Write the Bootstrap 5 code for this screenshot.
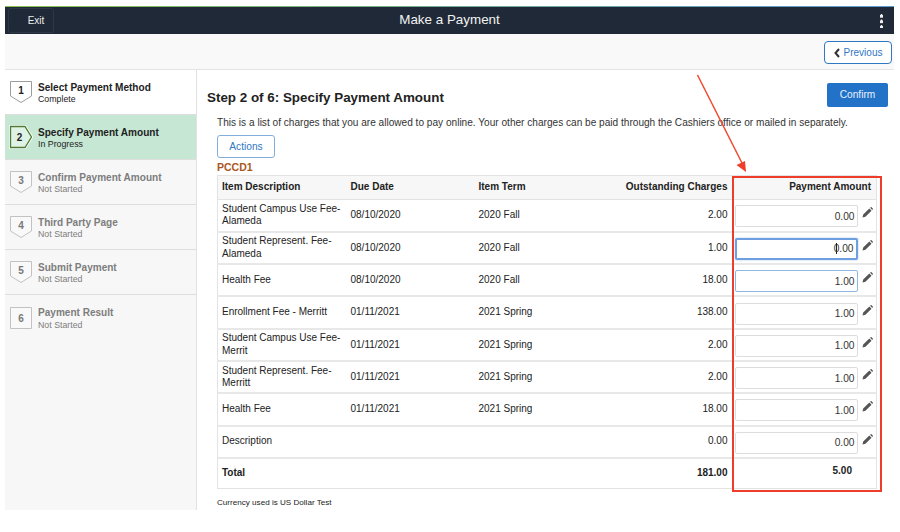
<!DOCTYPE html>
<html lang="en">
<head>
<meta charset="utf-8">
<title>Make a Payment</title>
<link rel="stylesheet" href="https://cdn.jsdelivr.net/npm/bootstrap@5.3.0/dist/css/bootstrap.min.css">
<style>
html,body{height:532px;overflow:hidden;background:#fff}
body{font-family:"Liberation Sans",Arial,sans-serif;font-size:10px;color:#222}
.shell{position:relative;height:532px;padding:6px 6px 0 5px}
.topbar{height:28px;background:#1f2937;border-top:1px solid;border-image:linear-gradient(90deg,#8cc152,#5b9bd5) 1;color:#fff}
.top-side{flex:1 1 0}
.exit-btn{width:46px;height:25px;margin-left:3px;border:1px solid #2d3746;border-radius:2px;color:#eee;font-size:10px;line-height:23px;text-align:center;padding-left:10px}
.top-title{font-size:13.4px;color:#f2f2f2}
.kebab{width:3px;height:14px;margin-right:11px;background:radial-gradient(circle at 1.5px 2px,#eee 1.6px,transparent 1.9px) 0 0/3px 5.5px repeat-y}
.subbar{height:36px;background:#f9f9f9;border-bottom:1px solid #e4e4e4;padding:7px 2px 0 0}
.prev-btn{width:68px;height:23px;padding:0;border:1.5px solid #2f78c4;border-radius:4px;background:#fff;color:#2f78c4;font-size:10px;gap:4px}
.prev-btn svg{width:6px;height:10px}
.body-area{height:440px}
.side{width:192px;flex:none;background:#f7f7f7;border-right:1px solid #e2e2e2}
.step{height:45px;padding:0 0 0 4px;border-bottom:1px solid #dedede;gap:5px;color:#7d7d7d}
.step svg{width:24px;height:24px;flex:none}
.step b{display:block;font-size:10.05px;line-height:11.5px;margin-top:3px}
.step small{display:block;font-size:8.8px;line-height:12px;font-weight:400}
.step.done{background:#fff;color:#222}
.step.now{background:#c6e7d4;color:#222}
.main{min-width:0;padding:0 0 0 10px;background:#fff}
.head-line{height:47px;padding:11px 6px 0 0}
.page-h{font-size:13.4px;font-weight:700;margin:9px 0 0;color:#222}
.confirm-btn{width:61px;height:24px;padding:0;background:#2272c8;border:0;border-radius:2px;color:#e9f1fb;font-size:10.2px;line-height:24px;margin-top:2px}
.intro{margin:0 0 0 10px;line-height:12px;font-size:10.1px;color:#333;height:18px}
.act-btn{display:block;margin:0 0 0 10px;width:58px;height:23px;padding:0;background:#fff;border:1px solid #82aedb;border-radius:3px;color:#2f78c4;font-size:10.2px;line-height:21px}
.org{margin:3px 0 1px 10px;font-size:10.5px;line-height:13px;font-weight:700;color:#a9571e}
.pay-table{width:660px;margin:0 0 0 10px;table-layout:fixed;border:1px solid #e3e3e3;font-size:10px;color:#222}
.pay-table th,.pay-table td{padding:0 5px 0 4px;vertical-align:middle;border-bottom:2px solid #e8e8e8;line-height:12.5px;box-shadow:none;color:#222}
.pay-table thead th{height:24px;background:#f7f7f7;font-weight:700;border-bottom:1px solid #e3e3e3}
.pay-table tbody td{height:32.3px}
.pay-table tfoot td{height:31px;font-weight:700;border-bottom:0}
.pay-table td.pay-cell{padding:0 0 0 2px}
.pay-table td.total-amt{padding:0 24px 5px 0}
.amt-wrap{position:relative;display:flex;align-items:center;gap:4px}
.amt{width:123px;height:22px;padding:0 2px 0 0;border:1px solid #ddd;border-radius:2px;font-size:10.2px;color:#333;text-align:right;background:#fff;margin-top:2px;font-family:inherit;outline:0}
.amt.ring{border:2px solid #6e9fdf;box-shadow:0 0 2px #9dbfee}
.amt.lit{border-color:#8fb5e3}
.caret-mark::after{content:"";position:absolute;left:101px;top:7px;width:1px;height:11px;background:#222}
.pen{width:11px;height:11px;flex:none;margin-top:-5px}
.red-box{position:absolute;left:732px;top:176px;width:150px;height:316px;border:2px solid #ef3d2c;pointer-events:none}
.arrow{position:absolute;left:690px;top:70px;width:70px;height:110px;pointer-events:none}
.foot-note{margin:8px 0 0 10px;font-size:8.1px;line-height:11px;color:#222}
</style>
</head>
<body>
<div class="shell">
  <header class="topbar d-flex align-items-center">
    <div class="top-side"><div class="exit-btn">Exit</div></div>
    <div class="top-title">Make a Payment</div>
    <div class="top-side d-flex justify-content-end"><div class="kebab"></div></div>
  </header>
  <div class="subbar d-flex justify-content-end align-items-start">
    <button class="prev-btn d-flex align-items-center justify-content-center" type="button"><svg viewBox="0 0 6 10"><path d="M5 1 1.500 5 5 9" fill="none" stroke="#333" stroke-width="2"/></svg>Previous</button>
  </div>
  <div class="body-area d-flex">
    <aside class="side">
      <div class="step done d-flex align-items-center">
        <svg viewBox="0 0 24 24"><path d="M1.500 1.500H22.500V16L12 22.500 1.500 16Z" fill="#fff" stroke="#9c9c9c"/><text x="12" y="13.500" text-anchor="middle" font-size="10" font-weight="700" fill="#222">1</text></svg>
        <div><b>Select Payment Method</b><small>Complete</small></div>
      </div>
      <div class="step now d-flex align-items-center">
        <svg viewBox="0 0 24 24"><path d="M1.500 1.500H16L22.500 12 16 22.500H1.500Z" fill="#dff2e6" stroke="#fff" stroke-width="3"/><path d="M1.500 1.500H16L22.500 12 16 22.500H1.500Z" fill="#dff2e6" stroke="#4f7a33" stroke-width="1.300"/><text x="10.500" y="15.500" text-anchor="middle" font-size="10" font-weight="700" fill="#222">2</text></svg>
        <div><b>Specify Payment Amount</b><small>In Progress</small></div>
      </div>
      <div class="step d-flex align-items-center">
        <svg viewBox="0 0 24 24"><path d="M1.500 1.500H22.500V16L12 22.500 1.500 16Z" fill="#f9f9f9" stroke="#c2c2c2"/><text x="12" y="13.500" text-anchor="middle" font-size="10" font-weight="700" fill="#777">3</text></svg>
        <div><b>Confirm Payment Amount</b><small>Not Started</small></div>
      </div>
      <div class="step d-flex align-items-center">
        <svg viewBox="0 0 24 24"><path d="M1.500 1.500H22.500V16L12 22.500 1.500 16Z" fill="#f9f9f9" stroke="#c2c2c2"/><text x="12" y="13.500" text-anchor="middle" font-size="10" font-weight="700" fill="#777">4</text></svg>
        <div><b>Third Party Page</b><small>Not Started</small></div>
      </div>
      <div class="step d-flex align-items-center">
        <svg viewBox="0 0 24 24"><path d="M1.500 1.500H22.500V16L12 22.500 1.500 16Z" fill="#f9f9f9" stroke="#c2c2c2"/><text x="12" y="13.500" text-anchor="middle" font-size="10" font-weight="700" fill="#777">5</text></svg>
        <div><b>Submit Payment</b><small>Not Started</small></div>
      </div>
      <div class="step d-flex align-items-center border-0">
        <svg viewBox="0 0 24 24"><path d="M1.500 1.500H22.500V22.500H1.500Z" fill="#f9f9f9" stroke="#c2c2c2"/><text x="12" y="15.500" text-anchor="middle" font-size="10" font-weight="700" fill="#777">6</text></svg>
        <div><b>Payment Result</b><small>Not Started</small></div>
      </div>
    </aside>
    <main class="main flex-grow-1">
      <div class="head-line d-flex justify-content-between align-items-start">
        <h1 class="page-h">Step 2 of 6: Specify Payment Amount</h1>
        <button class="confirm-btn" type="button">Confirm</button>
      </div>
      <p class="intro">This is a list of charges that you are allowed to pay online. Your other charges can be paid through the Cashiers office or mailed in separately.</p>
      <button class="act-btn" type="button">Actions</button>
      <div class="org">PCCD1</div>
      <table class="table pay-table mb-0">
        <colgroup><col style="width:129px"><col style="width:128px"><col style="width:128px"><col style="width:130px"><col></colgroup>
        <thead><tr><th>Item Description</th><th>Due Date</th><th>Item Term</th><th class="text-end">Outstanding Charges</th><th class="text-end">Payment Amount</th></tr></thead>
        <tbody>
          <tr><td>Student Campus Use Fee-Alameda</td><td>08/10/2020</td><td>2020 Fall</td><td class="text-end">2.00</td><td class="pay-cell"><div class="amt-wrap"><input class="amt" value="0.00" aria-label="Payment"><svg class="pen" viewBox="0 0 12 12"><path d="M0.500 11.500 1.300 8.300 8 1.600 10.400 4 3.700 10.700ZM8.800.8 9.500.2Q10 0 10.400.2L11.800 1.600Q12 2 11.800 2.500L11.200 3.200Z" fill="#555"/></svg></div></td></tr>
          <tr><td>Student Represent. Fee-Alameda</td><td>08/10/2020</td><td>2020 Fall</td><td class="text-end">1.00</td><td class="pay-cell"><div class="amt-wrap caret-mark"><input class="amt ring" value="0.00" aria-label="Payment"><svg class="pen" viewBox="0 0 12 12"><path d="M0.500 11.500 1.300 8.300 8 1.600 10.400 4 3.700 10.700ZM8.800.8 9.500.2Q10 0 10.400.2L11.800 1.600Q12 2 11.800 2.500L11.200 3.200Z" fill="#555"/></svg></div></td></tr>
          <tr><td>Health Fee</td><td>08/10/2020</td><td>2020 Fall</td><td class="text-end">18.00</td><td class="pay-cell"><div class="amt-wrap"><input class="amt lit" value="1.00" aria-label="Payment"><svg class="pen" viewBox="0 0 12 12"><path d="M0.500 11.500 1.300 8.300 8 1.600 10.400 4 3.700 10.700ZM8.800.8 9.500.2Q10 0 10.400.2L11.800 1.600Q12 2 11.800 2.500L11.200 3.200Z" fill="#555"/></svg></div></td></tr>
          <tr><td>Enrollment Fee - Merritt</td><td>01/11/2021</td><td>2021 Spring</td><td class="text-end">138.00</td><td class="pay-cell"><div class="amt-wrap"><input class="amt" value="1.00" aria-label="Payment"><svg class="pen" viewBox="0 0 12 12"><path d="M0.500 11.500 1.300 8.300 8 1.600 10.400 4 3.700 10.700ZM8.800.8 9.500.2Q10 0 10.400.2L11.800 1.600Q12 2 11.800 2.500L11.200 3.200Z" fill="#555"/></svg></div></td></tr>
          <tr><td>Student Campus Use Fee-Merrit</td><td>01/11/2021</td><td>2021 Spring</td><td class="text-end">2.00</td><td class="pay-cell"><div class="amt-wrap"><input class="amt" value="1.00" aria-label="Payment"><svg class="pen" viewBox="0 0 12 12"><path d="M0.500 11.500 1.300 8.300 8 1.600 10.400 4 3.700 10.700ZM8.800.8 9.500.2Q10 0 10.400.2L11.800 1.600Q12 2 11.800 2.500L11.200 3.200Z" fill="#555"/></svg></div></td></tr>
          <tr><td>Student Represent. Fee-Merritt</td><td>01/11/2021</td><td>2021 Spring</td><td class="text-end">2.00</td><td class="pay-cell"><div class="amt-wrap"><input class="amt" value="1.00" aria-label="Payment"><svg class="pen" viewBox="0 0 12 12"><path d="M0.500 11.500 1.300 8.300 8 1.600 10.400 4 3.700 10.700ZM8.800.8 9.500.2Q10 0 10.400.2L11.800 1.600Q12 2 11.800 2.500L11.200 3.200Z" fill="#555"/></svg></div></td></tr>
          <tr><td>Health Fee</td><td>01/11/2021</td><td>2021 Spring</td><td class="text-end">18.00</td><td class="pay-cell"><div class="amt-wrap"><input class="amt" value="1.00" aria-label="Payment"><svg class="pen" viewBox="0 0 12 12"><path d="M0.500 11.500 1.300 8.300 8 1.600 10.400 4 3.700 10.700ZM8.800.8 9.500.2Q10 0 10.400.2L11.800 1.600Q12 2 11.800 2.500L11.200 3.200Z" fill="#555"/></svg></div></td></tr>
          <tr><td>Description</td><td></td><td></td><td class="text-end">0.00</td><td class="pay-cell"><div class="amt-wrap"><input class="amt" value="0.00" aria-label="Payment"><svg class="pen" viewBox="0 0 12 12"><path d="M0.500 11.500 1.300 8.300 8 1.600 10.400 4 3.700 10.700ZM8.800.8 9.500.2Q10 0 10.400.2L11.800 1.600Q12 2 11.800 2.500L11.200 3.200Z" fill="#555"/></svg></div></td></tr>
        </tbody>
        <tfoot><tr><td>Total</td><td></td><td></td><td class="text-end">181.00</td><td class="text-end total-amt">5.00</td></tr></tfoot>
      </table>
      <p class="foot-note">Currency used is US Dollar Test</p>
    </main>
  </div>
  <div class="red-box"></div>
  <svg class="arrow" viewBox="0 0 70 110"><path d="M7.500 5 52 93" stroke="#ef4a30" stroke-width="1.500" fill="none"/><path d="M56 102 46.500 95 55 91Z" fill="#ef3d2c"/></svg>
</div>
<script src="https://cdn.jsdelivr.net/npm/bootstrap@5.3.0/dist/js/bootstrap.bundle.min.js"></script>
</body>
</html>
